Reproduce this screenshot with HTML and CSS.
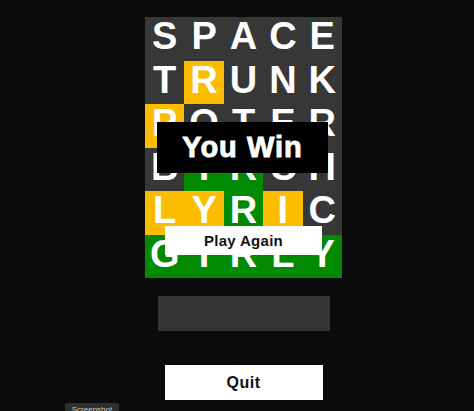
FILE: index.html
```html
<!DOCTYPE html>
<html lang="en">
<head>
  <meta charset="UTF-8" />
  <meta name="viewport" content="width=device-width, initial-scale=1.0"/>
  <title>Wordle</title>
  <link rel="stylesheet" href="styles.css">
</head>
<body>
  <div class="game">
    <div class="board-wrap">
      <div class="board">
        <div class="cell">S</div><div class="cell">P</div><div class="cell">A</div><div class="cell">C</div><div class="cell">E</div>
        <div class="cell">T</div><div class="cell present">R</div><div class="cell">U</div><div class="cell">N</div><div class="cell">K</div>
        <div class="cell present">P</div><div class="cell">O</div><div class="cell">T</div><div class="cell">E</div><div class="cell">R</div>
        <div class="cell">B</div><div class="cell correct">I</div><div class="cell correct">R</div><div class="cell">C</div><div class="cell">H</div>
        <div class="cell present">L</div><div class="cell present">Y</div><div class="cell correct">R</div><div class="cell present">I</div><div class="cell">C</div>
        <div class="cell correct">G</div><div class="cell correct">I</div><div class="cell correct">R</div><div class="cell correct">L</div><div class="cell correct">Y</div>
      </div>

      <div class="win-banner">You Win</div>
      <button class="btn play-again">Play Again</button>
    </div>

    <div class="message"></div>

    <button class="btn quit">Quit</button>
  </div>

  <div class="screenshot-tag">Screenshot</div>
</body>
</html>
```

FILE: styles.css
```css
* {
  box-sizing: border-box;
}

body {
  margin: 0;
  background-color: #0b0b0b;
  font-family: "Liberation Sans", Arial, sans-serif;
  min-height: 100vh;
}

.game {
  width: 197px;
  margin-left: 145px;
  padding-top: 17px;
  display: flex;
  flex-direction: column;
  align-items: center;
}

.board-wrap {
  position: relative;
  width: 197px;
}

.board {
  display: grid;
  grid-template-columns: repeat(5, 1fr);
  grid-auto-rows: 43.5px;
  background-color: #373737;
}

.cell {
  display: flex;
  justify-content: center;
  align-items: center;
  padding-bottom: 4px;
  color: #ffffff;
  font-size: 38px;
  font-weight: bold;
}

.present {
  background-color: #fcbd00;
}

.correct {
  background-color: #028a02;
}

.win-banner {
  position: absolute;
  left: 12px;
  top: 105px;
  width: 171px;
  height: 51px;
  background-color: #000;
  color: #fff;
  font-size: 29px;
  font-weight: bold;
  letter-spacing: 1px;
  -webkit-text-stroke: 0.9px #fff;
  display: flex;
  justify-content: center;
  align-items: center;
}

.btn {
  background-color: #fff;
  color: #111;
  border: none;
  font-family: "Liberation Sans", Arial, sans-serif;
  font-weight: bold;
  padding: 0;
}

.play-again {
  position: absolute;
  left: 20px;
  top: 209px;
  width: 157px;
  height: 29px;
  font-size: 15px;
  letter-spacing: 0.3px;
}

.message {
  width: 172px;
  height: 35px;
  margin-top: 18px;
  background-color: #343434;
}

.quit {
  width: 158px;
  height: 35px;
  margin-top: 34px;
  font-size: 16px;
  letter-spacing: 0.5px;
}

.screenshot-tag {
  position: fixed;
  left: 65px;
  top: 403px;
  width: 54px;
  height: 14px;
  background-color: #2e2e2e;
  color: #ccc;
  font-size: 8px;
  text-align: center;
  padding-top: 2px;
  border-radius: 2px;
}
```
